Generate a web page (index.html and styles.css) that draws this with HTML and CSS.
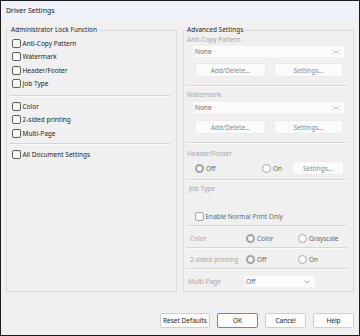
FILE: index.html
```html
<!DOCTYPE html>
<html lang="en">
  <head>
    <meta charset="UTF-8" />
    <title>Driver Settings</title>
    <link rel="stylesheet" href="styles.css">
  </head>
  <body>
    <div class="window">
      <div class="titlebar">Driver Settings</div>

      <div class="groups">
        <fieldset class="group lock">
          <legend>Administrator Lock Function</legend>
          <label class="check first"><span class="box"></span>Anti-Copy Pattern</label>
          <label class="check"><span class="box"></span>Watermark</label>
          <label class="check"><span class="box"></span>Header/Footer</label>
          <label class="check"><span class="box"></span>Job Type</label>
          <div class="sep"></div>
          <label class="check first"><span class="box"></span>Color</label>
          <label class="check"><span class="box"></span>2-sided printing</label>
          <label class="check"><span class="box"></span>Multi-Page</label>
          <div class="sep s2"></div>
          <label class="check all"><span class="box"></span>All Document Settings</label>
        </fieldset>

        <fieldset class="group adv">
          <legend>Advanced Settings</legend>

          <div class="label">Anti-Copy Pattern</div>
          <div class="select wide sel1">None<svg class="chev" width="6" height="4" viewBox="0 0 6 4"><polyline points="0.5,0.5 3,3 5.5,0.5" fill="none" stroke="#9a9a9a" stroke-width="0.8"/></svg></div>
          <div class="btnrow b1"><span class="btn dis add">Add/Delete...</span><span class="btn dis set">Settings...</span></div>
          <div class="sep"></div>

          <div class="label l2">Watermark</div>
          <div class="select wide sel2">None<svg class="chev" width="6" height="4" viewBox="0 0 6 4"><polyline points="0.5,0.5 3,3 5.5,0.5" fill="none" stroke="#9a9a9a" stroke-width="0.8"/></svg></div>
          <div class="btnrow b2"><span class="btn dis add">Add/Delete...</span><span class="btn dis set">Settings...</span></div>
          <div class="sep"></div>

          <div class="label l3">Header/Footer</div>
          <div class="hfrow">
            <span class="opt hf-off"><span class="radio on"></span>Off</span>
            <span class="opt hf-on"><span class="radio"></span>On</span>
            <span class="btn dis hf-set">Settings...</span>
          </div>
          <div class="sep tight"></div>

          <div class="label l4">Job Type</div>
          <label class="check job"><span class="box dim"></span>Enable Normal Print Only</label>
          <div class="sep tight"></div>

          <div class="optrow color">
            <span class="rowlabel">Color</span>
            <span class="opt"><span class="radio on"></span>Color</span>
            <span class="opt"><span class="radio"></span>Grayscale</span>
          </div>
          <div class="sep tight"></div>

          <div class="optrow duplex">
            <span class="rowlabel">2-sided printing</span>
            <span class="opt"><span class="radio on"></span>Off</span>
            <span class="opt"><span class="radio"></span>On</span>
          </div>
          <div class="sep tight"></div>

          <div class="optrow multi">
            <span class="rowlabel">Multi-Page</span>
            <div class="select small">Off<svg class="chev" width="6" height="4" viewBox="0 0 6 4"><polyline points="0.5,0.5 3,3 5.5,0.5" fill="none" stroke="#9a9a9a" stroke-width="0.8"/></svg></div>
          </div>
        </fieldset>
      </div>

      <div class="buttons">
        <button class="btn reset">Reset Defaults</button>
        <button class="btn ok">OK</button>
        <button class="btn">Cancel</button>
        <button class="btn">Help</button>
      </div>
    </div>
  </body>
</html>
```

FILE: styles.css
```css
* {
  margin: 0;
  padding: 0;
  outline: 0;
  box-sizing: border-box;
  font-family: 'Noto Sans', 'Liberation Sans', sans-serif;
}
body {
  width: 360px;
  height: 336px;
  background: #f0f0f0;
  font-size: 6.5px;
  color: #262626;
}
.window {
  width: 360px;
  height: 336px;
  border: 1px solid #1c1c1c;
  background: #f0f0f0;
  display: flex;
  flex-direction: column;
}
.titlebar {
  height: 19px;
  line-height: 19px;
  padding-left: 5px;
  font-size: 7px;
  background: #eff3f9;
  color: #1a1a1a;
}
.groups {
  height: 272px;
  padding: 5px 5px 0 5px;
  display: flex;
  gap: 6px;
}
.group {
  width: 171px;
  min-width: 0;
  border: 1px solid #dcdcdc;
  display: flex;
  flex-direction: column;
}
.group legend {
  line-height: 10px;
  padding: 0 1px;
  font-size: 6.5px;
  color: #262626;
}
.lock {
  padding: 0 5px;
}
.lock legend {
  margin-left: -2px;
}
.adv {
  padding: 0 3px;
}
.adv legend {
  margin-left: -1px;
}

/* checkboxes */
.check {
  height: 10px;
  display: flex;
  align-items: center;
  margin-top: 3.5px;
  white-space: nowrap;
}
.check.first {
  margin-top: 3px;
}
.lock .sep + .check.first {
  margin-top: 4px;
}
.check.all {
  margin-top: 5px;
}
.box {
  width: 9px;
  height: 9px;
  border: 1px solid #5f5f5f;
  border-radius: 2px;
  background: #f9f9f9;
  margin-right: 1.5px;
  flex-shrink: 0;
}
.box.dim {
  border-color: #a6a6a6;
}

.sep {
  height: 2px;
  border-top: 1px solid #d6d6d6;
  border-bottom: 1px solid #fafafa;
}
.lock .sep {
  margin: 6.5px 1px 0 -2px;
}
.lock .sep.s2 {
  margin-top: 4.5px;
}
.adv .sep {
  margin: 8px 3px 0 -1px;
}
.adv .sep.tight {
  margin-top: 4px;
}

/* advanced settings */
.label {
  height: 9px;
  line-height: 9px;
  color: #a6a6a6;
}
.label.l2 {
  margin-top: 3px;
}
.label.l3 {
  margin-top: 5px;
}
.label.l4 {
  margin-top: 3px;
  padding-left: 2px;
}
.select {
  height: 11px;
  padding-left: 2px;
  padding-right: 5px;
  background: #fcfcfc;
  color: #6a6a6a;
  display: flex;
  align-items: center;
  justify-content: space-between;
}
.select.wide {
  width: 151px;
  margin-left: 6px;
}
.sel1 {
  margin-top: 2px;
}
.sel2 {
  margin-top: 3px;
}
.btnrow {
  height: 14px;
  display: flex;
  gap: 8px;
  margin-left: 8px;
}
.b1 {
  margin-top: 6px;
}
.b2 {
  margin-top: 7px;
}
.btn {
  height: 15px;
  width: 41px;
  background: #fdfdfd;
  border: 1px solid #d0d0d0;
  border-radius: 2px;
  display: flex;
  align-items: center;
  justify-content: center;
  font-size: 6.5px;
  color: #262626;
  white-space: nowrap;
}
.btn.dis {
  height: 100%;
  background: #fbfbfb;
  border-color: #ebebeb;
  color: #8a8a8a;
}
.btn.add {
  width: 71px;
}
.btn.set {
  width: 69px;
}

.hfrow {
  height: 14px;
  margin-top: 3px;
  display: flex;
  align-items: center;
}
.opt {
  display: flex;
  align-items: center;
  color: #666;
  white-space: nowrap;
}
.hf-off {
  margin-left: 8px;
  width: 67px;
}
.hf-on {
  width: 30px;
}
.btn.hf-set {
  width: 52px;
}
.radio {
  width: 9px;
  height: 9px;
  border-radius: 50%;
  border: 1px solid #a8a8a8;
  background: #fafafa;
  margin-right: 2px;
  flex-shrink: 0;
}
.radio.on {
  border: 2.5px solid #a3a3a3;
  background: #f7f7f7;
}

.check.job {
  margin-top: 18px;
  margin-left: 8px;
  color: #666;
}
.optrow {
  height: 10px;
  display: flex;
  align-items: center;
}
.optrow.color {
  margin-top: 6px;
}
.optrow.duplex {
  margin-top: 5px;
}
.optrow.multi {
  height: 11px;
  margin-top: 6px;
}
.rowlabel {
  width: 59px;
  padding-left: 3px;
  color: #a6a6a6;
  white-space: nowrap;
}
.multi .rowlabel {
  width: 57px;
  padding-left: 1px;
}
.optrow .opt {
  width: 52px;
}
.select.small {
  width: 71px;
  height: 11px;
}

.buttons {
  display: flex;
  justify-content: flex-end;
  gap: 7px;
  padding: 21px 5px 0 0;
}
.btn.reset {
  width: 50px;
}
.btn.ok {
  border-color: #4c8fd6;
}
```
